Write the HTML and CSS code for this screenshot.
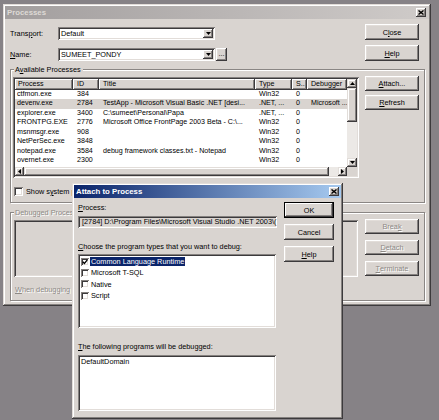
FILE: index.html
```html
<!DOCTYPE html>
<html lang="en">
<head>
    <meta charset="UTF-8">
    <title>Processes</title>
    <link rel="stylesheet" href="styles.css">
</head>
<body>
    <div class="window processes">
        <div class="titlebar inactive">
            <span>Processes</span>
            <span class="title-close"><svg width="6" height="5" viewBox="0 0 6 5"><path d="M0.5 0.5L5.5 4.5M5.5 0.5L0.5 4.5" stroke="#000" stroke-width="1.4"/></svg></span>
        </div>

        <div class="proc-body">
            <div class="top-grid">
                <span class="lbl">Trans<u>p</u>ort:</span>
                <div class="combo"><span class="combo-text">Default</span><span class="drop"><svg width="5" height="3" viewBox="0 0 5 3"><path d="M0 0h5L2.5 3z"/></svg></span></div>
                <button class="btn side">C<u>l</u>ose</button>

                <span class="lbl"><u>N</u>ame:</span>
                <div class="combo"><span class="combo-text">SUMEET_PONDY</span><span class="drop"><svg width="5" height="3" viewBox="0 0 5 3"><path d="M0 0h5L2.5 3z"/></svg></span></div>
                <button class="btn ellipsis">...</button>
                <button class="btn side"><u>H</u>elp</button>
            </div>

            <div class="group avail">
                <span class="legend">A<u>v</u>ailable Processes</span>
                <div class="avail-grid">
                    <div class="listview">
                        <div class="lv-main">
                            <div class="lv-header">
                                <span class="hcell first">Process</span>
                                <span class="hcell">ID</span>
                                <span class="hcell">Title</span>
                                <span class="hcell">Type</span>
                                <span class="hcell">S..</span>
                                <span class="hcell">Debugger</span>
                            </div>
                            <div class="lv-row"><span class="first">ctfmon.exe</span><span>384</span><span></span><span>Win32</span><span>0</span><span></span></div>
                            <div class="lv-row selected"><span class="first">devenv.exe</span><span>2784</span><span>TestApp - Microsoft Visual Basic .NET [desi...</span><span>.NET, ...</span><span>0</span><span>Microsoft ...</span></div>
                            <div class="lv-row"><span class="first">explorer.exe</span><span>3400</span><span>C:\sumeet\Personal\Papa</span><span>.NET, ...</span><span>0</span><span></span></div>
                            <div class="lv-row"><span class="first">FRONTPG.EXE</span><span>2776</span><span>Microsoft Office FrontPage 2003 Beta - C:\...</span><span>Win32</span><span>0</span><span></span></div>
                            <div class="lv-row"><span class="first">msnmsgr.exe</span><span>908</span><span></span><span>Win32</span><span>0</span><span></span></div>
                            <div class="lv-row"><span class="first">NetPerSec.exe</span><span>3848</span><span></span><span>Win32</span><span>0</span><span></span></div>
                            <div class="lv-row"><span class="first">notepad.exe</span><span>3584</span><span>debug framework classes.txt - Notepad</span><span>Win32</span><span>0</span><span></span></div>
                            <div class="lv-row"><span class="first">overnet.exe</span><span>2300</span><span></span><span>Win32</span><span>0</span><span></span></div>
                            <div class="lv-row"><span class="first">RealServ.exe</span><span>4040</span><span></span><span>Win32</span><span>0</span><span></span></div>
                        </div>
                        <div class="vscroll">
                            <span class="sb-btn"><svg width="5" height="3" viewBox="0 0 5 3"><path d="M0 3h5L2.5 0z"/></svg></span>
                            <span class="thumb v"></span>
                            <span class="track"></span>
                            <span class="sb-btn"><svg width="5" height="3" viewBox="0 0 5 3"><path d="M0 0h5L2.5 3z"/></svg></span>
                        </div>
                        <div class="hscroll">
                            <span class="sb-btn"><svg width="3" height="5" viewBox="0 0 3 5"><path d="M3 0v5L0 2.5z"/></svg></span>
                            <span class="thumb h"></span>
                            <span class="track"></span>
                            <span class="sb-btn"><svg width="3" height="5" viewBox="0 0 3 5"><path d="M0 0v5L3 2.5z"/></svg></span>
                        </div>
                        <div class="corner"></div>
                    </div>
                    <div class="btn-col">
                        <button class="btn"><u>A</u>ttach...</button>
                        <button class="btn"><u>R</u>efresh</button>
                    </div>
                    <div class="check-row">
                        <span class="checkbox"></span>
                        <span class="clip check-text">Show s<u>y</u>stem p</span>
                    </div>
                </div>
            </div>

            <div class="group debugged">
                <span class="legend clip disabled">Debugged Proces</span>
                <div class="deb-grid">
                    <div class="deb-list"></div>
                    <div class="btn-col wide">
                        <button class="btn disabled">Brea<u>k</u></button>
                        <button class="btn disabled"><u>D</u>etach</button>
                        <button class="btn disabled"><u>T</u>erminate</button>
                    </div>
                    <div class="deb-note clip disabled"><u>W</u>hen debugging i</div>
                </div>
            </div>
        </div>
    </div>

    <div class="window attach">
        <div class="titlebar active">
            <span>Attach to Process</span>
            <span class="title-close"><svg width="6" height="5" viewBox="0 0 6 5"><path d="M0.5 0.5L5.5 4.5M5.5 0.5L0.5 4.5" stroke="#000" stroke-width="1.4"/></svg></span>
        </div>
        <div class="attach-body">
            <div class="attach-main">
                <div class="lbl first-lbl"><u>P</u>rocess:</div>
                <div class="textbox readonly">[2784] D:\Program Files\Microsoft Visual Studio .NET 2003\(</div>
                <div class="lbl choose-lbl"><u>C</u>hoose the program types that you want to debug:</div>
                <div class="checklist">
                    <div class="ck-item"><span class="checkbox small"><svg width="6" height="6" viewBox="0 0 6 6"><path d="M0.8 2.8l1.6 1.7 2.9-3.6" fill="none" stroke="#000" stroke-width="1.3"/></svg></span><span class="ck-text sel">Common Language Runtime</span></div>
                    <div class="ck-item"><span class="checkbox small"></span><span class="ck-text">Microsoft T-SQL</span></div>
                    <div class="ck-item"><span class="checkbox small"></span><span class="ck-text">Native</span></div>
                    <div class="ck-item"><span class="checkbox small"></span><span class="ck-text">Script</span></div>
                </div>
                <div class="lbl follow-lbl"><u>T</u>he following programs will be debugged:</div>
                <div class="textbox multi">DefaultDomain</div>
            </div>
            <div class="btn-col dlg">
                <button class="btn default">OK</button>
                <button class="btn">Cancel</button>
                <button class="btn"><u>H</u>elp</button>
            </div>
        </div>
    </div>
</body>
</html>
```

FILE: styles.css
```css
* {
    margin: 0;
    padding: 0;
    box-sizing: border-box;
}

html, body {
    width: 439px;
    height: 420px;
    overflow: hidden;
}

body {
    position: relative;
    background: #868286;
    font-family: "Liberation Sans", Arial, sans-serif;
    font-size: 7.3px;
    line-height: 9px;
    color: #000;
}

u {
    text-decoration: underline;
    text-underline-offset: 1px;
}

/* windows */

.window {
    position: absolute;
    padding: 2px;
    background: #d9d4d0;
    box-shadow: inset -1px -1px #3c3a3c, inset 1px 1px #e2ddd9, inset -2px -2px #85817f, inset 2px 2px #fff;
}

.processes {
    left: 3px;
    top: 4px;
    width: 428px;
    height: 302px;
}

.attach {
    left: 72px;
    top: 183px;
    width: 271px;
    height: 236px;
}

.titlebar {
    height: 13px;
    display: flex;
    align-items: center;
    justify-content: space-between;
    padding: 0 3px 0 2px;
    font-size: 7.8px;
    font-weight: bold;
}

.inactive {
    background: linear-gradient(to right, #a29e9e, #cfcbc9);
    color: #dedad6;
}

.active {
    background: linear-gradient(to right, #0a246a, #a6caf0);
    color: #fff;
}

.attach .titlebar {
    padding-right: 2px;
}

.title-close {
    width: 10px;
    height: 9px;
    display: flex;
    align-items: center;
    justify-content: center;
    background: #d9d4d0;
    box-shadow: inset -1px -1px #3c3a3c, inset 1px 1px #fff, inset -2px -2px #85817f;
}

/* buttons */

.btn {
    font: inherit;
    color: #000;
    border: none;
    background: #d9d4d0;
    height: 15px;
    display: flex;
    align-items: center;
    justify-content: center;
    box-shadow: inset -1px -1px #3c3a3c, inset 1px 1px #fff, inset -2px -2px #85817f, inset 2px 2px #e2ddd9;
}

.btn.default {
    box-shadow: inset 0 0 0 1px #000, inset -2px -2px #3c3a3c, inset 2px 2px #fff, inset -3px -3px #85817f;
}

.btn.disabled, .disabled {
    color: #8d8985;
    text-shadow: 1px 1px #fff;
}

.btn-col {
    display: flex;
    flex-direction: column;
    gap: 4px;
}

.btn-col.wide {
    gap: 6px;
}

.btn-col.dlg {
    gap: 6px;
}

.btn-col.dlg .btn {
    height: 16px;
}

/* text that runs under the attach dialog */
.clip {
    overflow: hidden;
    white-space: nowrap;
}

/* top rows */

.proc-body {
    padding: 5px 4px 0 5px;
}

.top-grid {
    display: grid;
    grid-template-columns: 48px 157px 13px 1fr 54px;
    grid-template-rows: 16px 16px;
    row-gap: 5px;
    margin-right: 6px;
}

.lbl {
    align-self: center;
}

.top-grid .lbl {
    padding-top: 2px;
}

.combo {
    grid-column: 2;
    align-self: end;
    height: 13px;
    display: flex;
    align-items: center;
    justify-content: space-between;
    padding: 2px;
    background: #fff;
    box-shadow: inset 1px 1px #85817f, inset -1px -1px #fff, inset 2px 2px #3c3a3c, inset -2px -2px #e2ddd9;
}

.combo-text {
    padding-left: 1px;
}

.drop {
    width: 10px;
    height: 9px;
    display: flex;
    align-items: center;
    justify-content: center;
    background: #d9d4d0;
    box-shadow: inset -1px -1px #3c3a3c, inset 1px 1px #fff, inset -2px -2px #85817f;
}

.ellipsis {
    grid-column: 3;
    align-self: end;
    width: 11px;
    height: 13px;
    margin-left: 1px;
    padding-bottom: 2px;
}

.side {
    grid-column: 5;
    height: 16px;
}

/* group boxes */

.group {
    position: relative;
    border: 1px solid #8a8684;
    box-shadow: inset 1px 1px #fff, 1px 1px #fff;
}

.legend {
    position: absolute;
    top: -5px;
    left: 3px;
    padding: 0 2px 0 1px;
    background: #d9d4d0;
}

.legend.clip {
    max-width: 58px;
}

.avail {
    margin-top: 8px;
    height: 134px;
}

.avail-grid {
    display: grid;
    grid-template-columns: 346px 54px;
    column-gap: 6px;
    padding: 6px 5px 0 2px;
}

.check-row {
    grid-column: 1 / -1;
    display: flex;
    align-items: center;
    gap: 3px;
    margin-top: 9px;
    padding-left: 1px;
}

.check-text {
    max-width: 46px;
}

.checkbox {
    flex: none;
    width: 9px;
    height: 9px;
    display: flex;
    align-items: center;
    justify-content: center;
    background: #fff;
    box-shadow: inset 1px 1px #85817f, inset -1px -1px #fff, inset 2px 2px #3c3a3c, inset -2px -2px #e2ddd9;
}

/* list view */

.listview {
    margin-top: 1px;
    height: 101px;
    padding: 2px;
    background: #fff;
    display: grid;
    grid-template-columns: 1fr 10px;
    grid-template-rows: 1fr 9px;
    box-shadow: inset 1px 1px #85817f, inset -1px -1px #fff, inset 2px 2px #3c3a3c, inset -2px -2px #e2ddd9;
}

.lv-main {
    overflow: hidden;
    white-space: nowrap;
    font-size: 7.1px;
}

.lv-header, .lv-row {
    display: grid;
    grid-template-columns: 58px 26px 156px 37px 15px 40px;
}

.lv-header {
    height: 11px;
}

.hcell {
    padding-left: 4px;
    line-height: 10px;
    background: #d9d4d0;
    overflow: hidden;
    box-shadow: inset -1px -1px #3c3a3c, inset 1px 1px #fff, inset -2px -2px #85817f;
}

.hcell.first {
    padding-left: 3px;
}

.lv-row {
    height: 9.45px;
    line-height: 9.45px;
}

.lv-row span {
    padding-left: 4px;
    overflow: hidden;
}

.lv-row span.first {
    padding-left: 2px;
}

.lv-row.selected {
    background: #d9d4d0;
}

.vscroll {
    display: flex;
    flex-direction: column;
}

.hscroll {
    display: flex;
}

.sb-btn {
    flex: none;
    width: 10px;
    height: 9px;
    display: flex;
    align-items: center;
    justify-content: center;
    background: #d9d4d0;
    box-shadow: inset -1px -1px #3c3a3c, inset 1px 1px #e2ddd9, inset -2px -2px #85817f, inset 2px 2px #fff;
}

.hscroll .sb-btn {
    width: 9px;
}

.thumb {
    flex: none;
    background: #d9d4d0;
    box-shadow: inset -1px -1px #3c3a3c, inset 1px 1px #e2ddd9, inset -2px -2px #85817f, inset 2px 2px #fff;
}

.thumb.v {
    height: 34px;
}

.thumb.h {
    width: 305px;
}

.track {
    flex: 1;
    background: #ece9e6;
}

.corner {
    background: #d9d4d0;
}

/* debugged processes */

.debugged {
    margin-top: 9px;
    height: 89px;
}

.deb-grid {
    display: grid;
    grid-template-columns: 344px 54px;
    column-gap: 7px;
    padding: 6px 5px 0 3px;
}

.deb-list {
    margin-top: 1px;
    height: 57px;
    box-shadow: inset 1px 1px #85817f, inset -1px -1px #fff, inset 2px 2px #3c3a3c, inset -2px -2px #e2ddd9;
}

.deb-note {
    grid-column: 1 / -1;
    justify-self: start;
    max-width: 57px;
    margin-top: 8px;
    padding-left: 1px;
}

/* attach dialog */

.attach-body {
    display: grid;
    grid-template-columns: 199px 50px;
    column-gap: 7px;
    padding: 4px 7px 0 4px;
}

.attach-main {
    display: flex;
    flex-direction: column;
}

.attach-main .lbl {
    align-self: flex-start;
}

.first-lbl {
    margin-top: 1px;
}

.textbox {
    padding: 2px 3px;
    white-space: nowrap;
    overflow: hidden;
    box-shadow: inset 1px 1px #85817f, inset -1px -1px #fff, inset 2px 2px #3c3a3c, inset -2px -2px #e2ddd9;
}

.textbox.readonly {
    margin-top: 4px;
    height: 12px;
    line-height: 8px;
    padding-left: 4px;
}

.choose-lbl {
    margin-top: 14px;
}

.checklist {
    margin-top: 3px;
    height: 74px;
    width: 198px;
    padding: 2px 3px;
    background: #fff;
    box-shadow: inset 1px 1px #85817f, inset -1px -1px #fff, inset 2px 2px #3c3a3c, inset -2px -2px #e2ddd9;
}

.ck-item {
    height: 11.3px;
    display: flex;
    align-items: center;
    gap: 1px;
}

.checkbox.small {
    width: 8px;
    height: 8px;
}

.ck-text {
    padding: 0 1px;
    line-height: 9px;
}

.ck-text.sel {
    background: #0a246a;
    color: #fff;
}

.follow-lbl {
    margin-top: 14px;
}

.textbox.multi {
    margin-top: 4px;
    width: 198px;
    height: 56px;
    background: #fff;
    line-height: 9px;
}
```
